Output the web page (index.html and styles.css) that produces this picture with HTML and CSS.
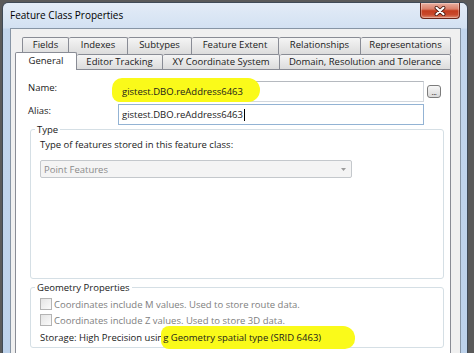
FILE: index.html
```html
<!DOCTYPE html>
<html>
<head>
<meta charset="utf-8">
<link rel="stylesheet" href="styles.css">
</head>
<body>
<div class="window">
  <div class="titlebar">
    <span class="title">Feature Class Properties</span>
    <div class="close">
      <svg width="12" height="10" viewBox="0 0 12 10"><path d="M2.5 1.8 L9.5 8.2 M9.5 1.8 L2.5 8.2" stroke="#4a1a10" stroke-width="3.8" stroke-linecap="round"/><path d="M2.5 1.8 L9.5 8.2 M9.5 1.8 L2.5 8.2" stroke="#ffffff" stroke-width="2.1" stroke-linecap="round"/></svg>
    </div>
  </div>
  <div class="client">
    <div class="tabs">
      <div class="tabrow row1">
        <div class="tab t-fields">Fields</div>
        <div class="tab t-indexes">Indexes</div>
        <div class="tab t-subtypes">Subtypes</div>
        <div class="tab t-extent">Feature Extent</div>
        <div class="tab t-rel">Relationships</div>
        <div class="tab t-rep">Representations</div>
      </div>
      <div class="tabrow row2">
        <div class="tab sel t-general">General</div>
        <div class="tab t-editor">Editor Tracking</div>
        <div class="tab t-xy">XY Coordinate System</div>
        <div class="tab t-domain">Domain, Resolution and Tolerance</div>
      </div>
      <div class="panel">
        <div class="form">
          <div class="lbl">Name:</div>
          <div class="input name"><span class="hl hl-name">gistest.DBO.reAddress6463</span></div>
          <div class="dots">...</div>
          <div class="lbl">Alias:</div>
          <div class="input alias">gistest.DBO.reAddress6463<span class="caret"></span></div>
        </div>
        <fieldset class="group type">
          <legend>Type</legend>
          <div class="type-body">
            <div class="text">Type of features stored in this feature class:</div>
            <div class="select"><span>Point Features</span><svg width="5" height="3" viewBox="0 0 5 3"><path d="M0 0H5L2.5 3Z" fill="#9c9c9c"/></svg></div>
          </div>
        </fieldset>
        <fieldset class="group geom">
          <legend>Geometry Properties</legend>
          <div class="geom-body">
            <div class="check"><span class="box"></span>Coordinates include M values. Used to store route data.</div>
            <div class="check"><span class="box"></span>Coordinates include Z values. Used to store 3D data.</div>
            <div class="storage">Storage: High Precision usin<span class="hl hl-geo">g Geometry spatial type (SRID 6463)</span></div>
          </div>
        </fieldset>
      </div>
    </div>
  </div>
</div>
</body>
</html>
```
FILE: styles.css
```css
body {
  margin: 0;
  width: 474px;
  height: 353px;
  overflow: hidden;
  background: #5a5a5a;
  font-family: "Open Sans", "Liberation Sans", sans-serif;
  font-size: 9.5px;
  color: #1a1a1a;
}

.window {
  box-sizing: border-box;
  margin: 2px 0 0 2px;
  width: 466px;
  height: 351px;
  border: 1px solid #3f4a57;
  border-bottom: 0;
  border-radius: 6px 6px 0 0;
  background: linear-gradient(#e3ecf7 0, #d3e1f2 25px, #c3d6ed 26px, #bdd2eb 100%);
  padding: 0 6px 0 7px;
  display: flex;
  flex-direction: column;
}

.titlebar {
  height: 25px;
  flex: none;
  display: flex;
  align-items: flex-start;
}

.title {
  line-height: 24px;
  font-size: 10px;
  color: #000;
}

.close {
  margin-left: auto;
  margin-right: 1px;
  box-sizing: border-box;
  width: 40px;
  height: 16px;
  border: 1px solid #6b2418;
  border-top: 0;
  border-radius: 0 0 4px 4px;
  background: linear-gradient(#eab0a0 0, #da806a 40%, #c43d1f 52%, #c94a2d 78%, #df8d73 100%);
  box-shadow: inset 0 0 0 1px rgba(255, 255, 255, 0.3);
  display: flex;
  align-items: center;
  justify-content: center;
}

.client {
  flex: 1;
  min-height: 0;
  overflow: hidden;
  background: #f0f0f0;
  border: 1px solid #8795a5;
  border-bottom: 0;
}

.tabs {
  margin: 8px 0 0 4px;
  width: 436px;
}

.tabrow {
  display: flex;
}

.row1 {
  padding-left: 7px;
}

.tab {
  box-sizing: border-box;
  border: 1px solid #898c95;
  border-bottom: 0;
  border-left: 0;
  border-radius: 2px 2px 0 0;
  background: linear-gradient(#f5f5f5, #e8e8e8 50%, #dcdcdc);
  text-align: center;
  white-space: nowrap;
  color: #1a1a1a;
}

.tab:first-child {
  border-left: 1px solid #898c95;
}

.row1 .tab {
  height: 17px;
  line-height: 14px;
  padding-bottom: 2px;
}

.row2 .tab {
  height: 15px;
  line-height: 14px;
}

.row2 .tab.sel {
  position: relative;
  z-index: 1;
  height: 18px;
  margin-top: -2px;
  margin-bottom: -1px;
  line-height: 15px;
  background: #fff;
}

.t-fields { width: 47px; }
.t-indexes { width: 59px; }
.t-subtypes { width: 64px; }
.t-extent { width: 87px; }
.t-rel { width: 82px; }
.t-rep { width: 90px; }
.t-general { width: 62px; }
.t-editor { width: 86px; }
.t-xy { width: 117px; }
.t-domain { width: 171px; }

.panel {
  box-sizing: border-box;
  width: 436px;
  height: 284px;
  background: #fff;
  border: 1px solid #898c95;
  border-bottom: 0;
}

.form {
  display: grid;
  grid-template-columns: 87px 306px 14px;
  grid-template-rows: 21px 21px;
  column-gap: 3px;
  row-gap: 2px;
  margin: 11px 0 0 12px;
}

.lbl {
  line-height: 14px;
  align-self: start;
}

.input {
  box-sizing: border-box;
  height: 21px;
  border: 1px solid #d2d7dd;
  border-top-color: #b5b9bf;
  background: #fff;
  padding-left: 3px;
  line-height: 19px;
  white-space: nowrap;
}

.alias {
  border-color: #93b3d4;
}

.dots {
  align-self: center;
  box-sizing: border-box;
  width: 14px;
  height: 13px;
  border: 1px solid #7c7c7c;
  border-radius: 3px;
  background: linear-gradient(#f7f7f7, #d9d9d9);
  font-size: 8px;
  line-height: 12px;
  text-align: center;
  letter-spacing: -0.5px;
  color: #222;
}

.caret {
  display: inline-block;
  width: 0;
  height: 12px;
  border-left: 1px solid #000;
  vertical-align: middle;
  margin-left: 1px;
}

.hl {
  background: #fafa1a;
}

.hl-name {
  padding: 7px 17px 4px 10px;
  margin: 0 -17px 0 -10px;
  border-radius: 10px 12px 12px 8px;
}

.hl-geo {
  padding: 5px 34px 5px 2px;
  margin: 0 -34px 0 -2px;
  border-radius: 8px 12px 10px 8px;
}

.group {
  box-sizing: border-box;
  margin: 0 0 0 14px;
  padding: 0;
  width: 414px;
  min-width: 0;
  border: 1px solid #d5dfe5;
  border-radius: 3px;
}

.group legend {
  margin-left: 4px;
  padding: 0 2px;
  line-height: 9px;
}

.type-body {
  box-sizing: border-box;
  height: 144px;
  padding: 4px 0 0 9px;
}

.text {
  line-height: 14px;
}

.select {
  margin-top: 8px;
  box-sizing: border-box;
  width: 312px;
  height: 18px;
  border: 1px solid #c4c8cc;
  border-radius: 2px;
  background: #f4f4f4;
  color: #8b8b8b;
  display: flex;
  align-items: center;
  justify-content: space-between;
  padding: 0 5px 0 3px;
}

.geom {
  margin-top: 4px;
}

.geom-body {
  padding: 4px 0 1px 9px;
}

.check {
  display: flex;
  align-items: center;
  height: 16px;
  color: #7e7e7e;
  white-space: nowrap;
}

.box {
  box-sizing: border-box;
  width: 12px;
  height: 12px;
  border: 1px solid #b4b4b4;
  background: linear-gradient(135deg, #e4e4e4, #fbfbfb);
  margin-right: 2px;
}

.storage {
  margin-top: 2px;
  line-height: 16px;
  white-space: nowrap;
}
```
